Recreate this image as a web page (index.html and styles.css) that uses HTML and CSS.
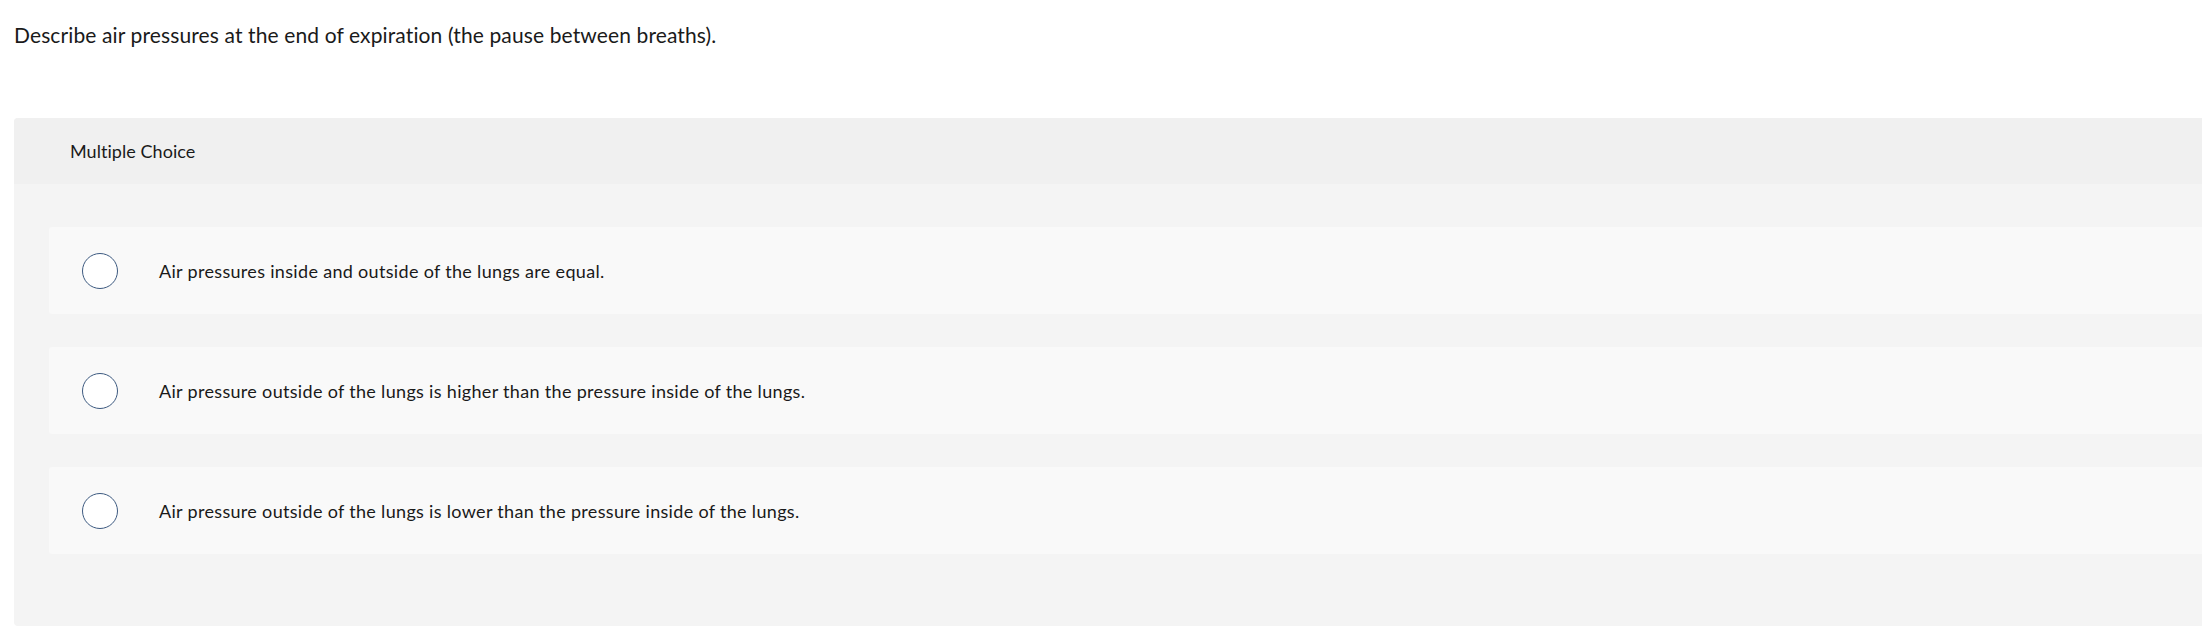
FILE: index.html
```html
<!DOCTYPE html>
<html>
<head>
<meta charset="utf-8">
<link rel="stylesheet" href="styles.css">
</head>
<body>
<div class="page">
  <p class="prompt">Describe air pressures at the end of expiration (the pause between breaths).</p>
  <section class="card">
    <header class="card-head">Multiple Choice</header>
    <div class="card-body">
      <label class="option"><span class="radio"></span><span class="option-text">Air pressures inside and outside of the lungs are equal.</span></label>
      <label class="option"><span class="radio"></span><span class="option-text">Air pressure outside of the lungs is higher than the pressure inside of the lungs.</span></label>
      <label class="option"><span class="radio"></span><span class="option-text">Air pressure outside of the lungs is lower than the pressure inside of the lungs.</span></label>
    </div>
  </section>
</div>
</body>
</html>
```
FILE: styles.css
```css
html, body {
  margin: 0;
  padding: 0;
  background: #ffffff;
  overflow: hidden;
}
body {
  font-family: "Lato", "Liberation Sans", sans-serif;
  color: #1a1a1a;
}
.page {
  padding: 0 0 0 14px;
}
.prompt {
  margin: 0;
  padding-top: 22px;
  font-size: 21px;
  letter-spacing: 0.12px;
  line-height: 26px;
  height: 118px;
  box-sizing: border-box;
}
.card {
  width: 2260px;
  border-radius: 4px;
  background: #f4f4f4;
  overflow: hidden;
}
.card-head {
  height: 66px;
  display: flex;
  align-items: center;
  padding-left: 56px;
  background: #f0f0f0;
  font-size: 18px;
  letter-spacing: 0.05px;
}
.card-body {
  padding: 43px 0 72px 35px;
  display: flex;
  flex-direction: column;
  gap: 33px;
}
.option {
  height: 87px;
  display: flex;
  align-items: center;
  background: #f9f9f9;
  border-radius: 3px;
  padding-left: 33px;
  font-size: 18px;
  letter-spacing: 0.32px;
}
.radio {
  width: 36px;
  height: 36px;
  box-sizing: border-box;
  border: 1.3px solid #3d5a80;
  border-radius: 50%;
  background: #ffffff;
  flex: none;
}
.option-text {
  margin-left: 41px;
}
```
